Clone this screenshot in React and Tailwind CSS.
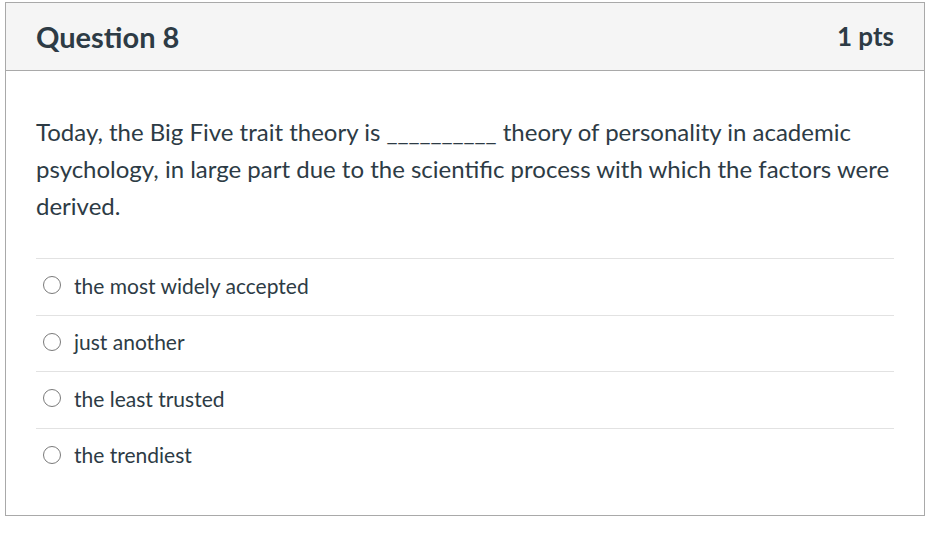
import React from "react";

const answers = [
  "the most widely accepted",
  "just another",
  "the least trusted",
  "the trendiest",
];

export default function App() {
  return (
    <div className="w-[940px] h-[538px] bg-white pt-[2px] pl-[5px]" style={{ fontFamily: "Lato, 'Liberation Sans', sans-serif" }}>
      <div className="w-[920px] h-[514px] border border-[#a9a9a9] flex flex-col">
        <div className="h-[68px] shrink-0 bg-[#f5f5f5] border-b border-[#a9a9a9] flex items-center justify-between px-[30px] text-[#2d3b45]">
          <span className="text-[29px] font-bold">Question 8</span>
          <span className="text-[26px] font-bold">1 pts</span>
        </div>
        <div className="px-[30px] pt-[42px]">
          <p className="text-[24px] leading-[37px] text-[#2d3b45]">
            Today, the Big Five trait theory is __________ theory of personality in academic psychology, in large part due to the scientific process with which the factors were derived.
          </p>
          <div className="mt-[34px]">
            {answers.map((a) => (
              <div key={a} className="h-[56.5px] pb-[3px] border-t border-[#e2e2e2] flex items-center pl-[7px]">
                <span className="w-[18px] h-[18px] rounded-full border-[1.5px] border-[#7a7a7a] shrink-0" />
                <span className="ml-[13px] text-[21px] text-[#2d3b45]">{a}</span>
              </div>
            ))}
          </div>
        </div>
      </div>
    </div>
  );
}
